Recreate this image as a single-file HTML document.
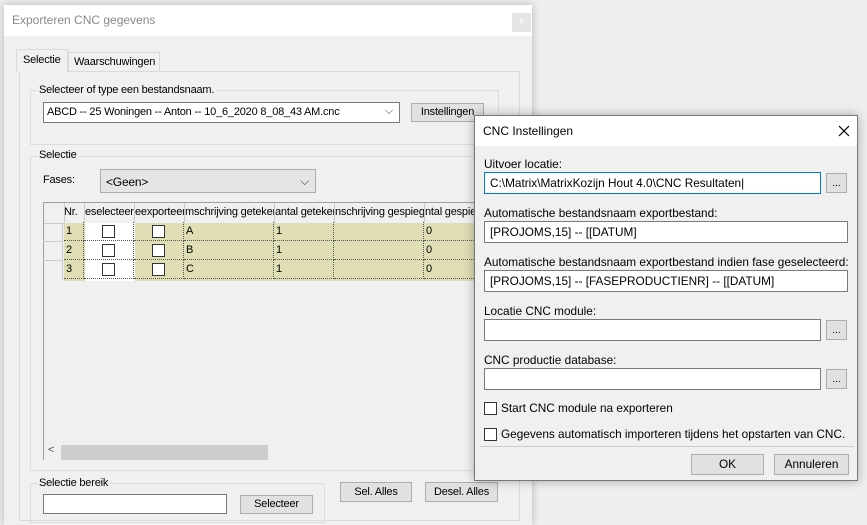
<!DOCTYPE html>
<html><head><style>
*{box-sizing:border-box;margin:0;padding:0}
body{width:867px;height:510px;background:#efefef;position:relative;overflow:hidden;font-family:"Liberation Sans",sans-serif;font-size:11px;color:#000}
.a{position:absolute}
.m{letter-spacing:-0.2px}
.win{left:4px;top:5px;width:528px;height:520px;background:#f0f0f0;box-shadow:0 0 8px rgba(0,0,0,.25)}
.btn{position:absolute;background:#e1e1e1;border:1px solid #adadad;text-align:center}
.grp{position:absolute;border:1px solid #dcdcdc}
.gl{position:absolute;background:#f0f0f0;padding:0 2px}
.tb{position:absolute;background:#fff;border:1px solid #7a7a7a}
.cb{position:absolute;width:13px;height:13px;border:1px solid #333;background:#fff}
.cell{position:absolute;border-right:1px dotted #555;border-bottom:1px dotted #555;height:19px;line-height:18px;padding-left:2px;white-space:nowrap;overflow:hidden}
.d{font-size:11.8px}
</style></head><body>
<div class="a win"></div>
<div class="a" style="left:4px;top:5px;width:528px;height:31px;background:#fff"></div>
<div class="a" style="left:12px;top:13px;font-size:12px;color:#888">Exporteren CNC gegevens</div>
<div class="a" style="left:512px;top:13px;width:19px;height:19px;background:#e5e5e5;color:#fff;text-align:center;line-height:18px;font-size:10px">x</div>
<div class="m">
<div class="a" style="left:19px;top:71px;width:501px;height:450px;border:1px solid #dadada;background:#f0f0f0"></div>
<div class="a" style="left:16px;top:49px;width:52px;height:23px;border:1px solid #dadada;border-bottom:none;background:#f0f0f0;padding:4px 0 0 6px">Selectie</div>
<div class="a" style="left:68px;top:52px;width:92px;height:19px;border:1px solid #dadada;border-bottom:none;background:#f0f0f0;padding:3px 0 0 5px">Waarschuwingen</div>
<div class="grp" style="left:30px;top:90px;width:469px;height:55px"></div>
<div class="gl" style="left:37px;top:84px">Selecteer of type een bestandsnaam.</div>
<div class="tb" style="left:43px;top:102px;width:357px;height:21px;padding:3px 0 0 3px;font-size:11px">ABCD -- 25 Woningen -- Anton -- 10_6_2020 8_08_43 AM.cnc<span class="a" style="right:6px;top:2px;color:#444">⌵</span></div>
<div class="btn" style="left:411px;top:103px;width:73px;height:19px;line-height:17px">Instellingen</div>
<div class="grp" style="left:30px;top:156px;width:480px;height:315px"></div>
<div class="gl" style="left:37px;top:149px">Selectie</div>
<div class="a" style="left:43px;top:174px">Fases:</div>
<div class="a" style="left:100px;top:169px;width:216px;height:24px;background:#e5e5e5;border:1px solid #adadad;padding:5px 0 0 5px;font-size:12px">&lt;Geen&gt;<span class="a" style="right:6px;top:4px;color:#444">⌵</span></div>
<div class="a" style="left:43px;top:202px;width:440px;height:258px;border:1px solid #a0a0a0;background:#f0f0f0;overflow:hidden">
 <div class="a" style="left:20px;top:3px">Nr.</div>
 <div class="a" style="left:41px;top:3px;width:49px;overflow:hidden;white-space:nowrap">eselecteerd</div>
 <div class="a" style="left:91px;top:3px;width:49px;overflow:hidden;white-space:nowrap">eexporteerd</div>
 <div class="a" style="left:141px;top:3px;width:89px;overflow:hidden;white-space:nowrap">mschrijving getekend</div>
 <div class="a" style="left:231px;top:3px;width:59px;overflow:hidden;white-space:nowrap">antal getekend</div>
 <div class="a" style="left:291px;top:3px;width:89px;overflow:hidden;white-space:nowrap">nschrijving gespiegeld</div>
 <div class="a" style="left:381px;top:3px;white-space:nowrap">ntal gespiegeld</div>
 <div class="a" style="left:20px;top:0;width:1px;height:20px;background:#ccc"></div>
 <div class="a" style="left:40px;top:0;width:1px;height:20px;background:#ccc"></div>
 <div class="a" style="left:90px;top:0;width:1px;height:20px;background:#ccc"></div>
 <div class="a" style="left:140px;top:0;width:1px;height:20px;background:#ccc"></div>
 <div class="a" style="left:230px;top:0;width:1px;height:20px;background:#ccc"></div>
 <div class="a" style="left:290px;top:0;width:1px;height:20px;background:#ccc"></div>
 <div class="a" style="left:380px;top:0;width:1px;height:20px;background:#ccc"></div>
 <div class="a" style="left:0;top:20px;width:440px;height:1px;background:#ccc"></div>
 <div class="a" style="left:20px;top:20px;width:420px;height:58px;background:#e0deb4"></div>
 <div class="a" style="left:41px;top:20px;width:50px;height:58px;background:#fff"></div>
</div>
<div class="a" style="left:43px;top:222px;width:440px">
 <div class="a" style="left:0;top:0;width:20px;height:58px;border-right:1px solid #ccc"></div>
 <div class="a" style="left:0;top:19px;width:20px;height:1px;background:#ccc"></div>
 <div class="a" style="left:0;top:38px;width:20px;height:1px;background:#ccc"></div>
</div>
<div class="a" style="left:64px;top:222px">
 <div class="cell" style="left:0;top:0;width:20px">1</div><div class="cell" style="left:20px;top:0;width:50px"></div><div class="cell" style="left:70px;top:0;width:50px"></div><div class="cell" style="left:120px;top:0;width:90px">A</div><div class="cell" style="left:210px;top:0;width:60px">1</div><div class="cell" style="left:270px;top:0;width:90px"></div><div class="cell" style="left:360px;top:0;width:60px">0</div>
 <div class="cell" style="left:0;top:19px;width:20px">2</div><div class="cell" style="left:20px;top:19px;width:50px"></div><div class="cell" style="left:70px;top:19px;width:50px"></div><div class="cell" style="left:120px;top:19px;width:90px">B</div><div class="cell" style="left:210px;top:19px;width:60px">1</div><div class="cell" style="left:270px;top:19px;width:90px"></div><div class="cell" style="left:360px;top:19px;width:60px">0</div>
 <div class="cell" style="left:0;top:38px;width:20px">3</div><div class="cell" style="left:20px;top:38px;width:50px"></div><div class="cell" style="left:70px;top:38px;width:50px"></div><div class="cell" style="left:120px;top:38px;width:90px">C</div><div class="cell" style="left:210px;top:38px;width:60px">1</div><div class="cell" style="left:270px;top:38px;width:90px"></div><div class="cell" style="left:360px;top:38px;width:60px">0</div>
 <div class="cb" style="left:38px;top:3px"></div><div class="cb" style="left:88px;top:3px"></div>
 <div class="cb" style="left:38px;top:22px"></div><div class="cb" style="left:88px;top:22px"></div>
 <div class="cb" style="left:38px;top:41px"></div><div class="cb" style="left:88px;top:41px"></div>
</div>
<div class="a" style="left:44px;top:444px;width:439px;height:16px;background:#f0f0f0"></div>
<div class="a" style="left:48px;top:444px;color:#555;font-size:11px">&lt;</div>
<div class="a" style="left:61px;top:445px;width:207px;height:15px;background:#cdcdcd"></div>
<div class="grp" style="left:30px;top:483px;width:295px;height:40px"></div>
<div class="gl" style="left:37px;top:477px">Selectie bereik</div>
<div class="tb" style="left:43px;top:494px;width:184px;height:20px"></div>
<div class="btn" style="left:240px;top:495px;width:73px;height:19px;line-height:17px">Selecteer</div>
<div class="btn" style="left:340px;top:482px;width:72px;height:20px;line-height:18px">Sel. Alles</div>
<div class="btn" style="left:425px;top:482px;width:73px;height:20px;line-height:18px">Desel. Alles</div>
</div>

<div class="a d" style="left:474px;top:115px;width:384px;height:366px;background:#f0f0f0;border:1px solid #777;box-shadow:0 0 10px rgba(0,0,0,.3)">
 <div class="a" style="left:0;top:0;width:382px;height:30px;background:#fff"></div>
 <div class="a" style="left:8px;top:8px;font-size:12px">CNC Instellingen</div>
 <svg class="a" style="left:363px;top:9px" width="12" height="12"><path d="M1 1L11 11M11 1L1 11" stroke="#000" stroke-width="1.2"/></svg>
 <div class="a" style="left:9px;top:41px">Uitvoer locatie:</div>
 <div class="a" style="left:9px;top:56px;width:337px;height:22px;background:#fff;border:1px solid #0078d7;padding:3px 0 0 5px">C:\Matrix\MatrixKozijn Hout 4.0\CNC Resultaten|</div>
 <div class="btn" style="left:351px;top:57px;width:21px;height:20px;font-size:10px;line-height:20px">...</div>
 <div class="a" style="left:9px;top:90px">Automatische bestandsnaam exportbestand:</div>
 <div class="tb" style="left:9px;top:105px;width:364px;height:22px;padding:3px 0 0 5px">[PROJOMS,15] -- [[DATUM]</div>
 <div class="a" style="left:9px;top:139px">Automatische bestandsnaam exportbestand indien fase geselecteerd:</div>
 <div class="tb" style="left:9px;top:154px;width:364px;height:22px;padding:3px 0 0 5px">[PROJOMS,15] -- [FASEPRODUCTIENR] -- [[DATUM]</div>
 <div class="a" style="left:9px;top:188px">Locatie CNC module:</div>
 <div class="tb" style="left:9px;top:203px;width:337px;height:22px"></div>
 <div class="btn" style="left:351px;top:204px;width:21px;height:20px;font-size:10px;line-height:20px">...</div>
 <div class="a" style="left:9px;top:237px">CNC productie database:</div>
 <div class="tb" style="left:9px;top:252px;width:337px;height:22px"></div>
 <div class="btn" style="left:351px;top:253px;width:21px;height:20px;font-size:10px;line-height:20px">...</div>
 <div class="cb" style="left:9px;top:286px"></div><div class="a" style="left:26px;top:285px">Start CNC module na exporteren</div>
 <div class="cb" style="left:9px;top:312px"></div><div class="a" style="left:26px;top:311px">Gegevens automatisch importeren tijdens het opstarten van CNC.</div>
 <div class="a" style="left:5px;top:330px;width:374px;height:1px;background:#ccc"></div>
 <div class="btn" style="left:216px;top:338px;width:73px;height:21px;line-height:19px">OK</div>
 <div class="btn" style="left:299px;top:338px;width:75px;height:21px;line-height:19px">Annuleren</div>
</div>
</body></html>
